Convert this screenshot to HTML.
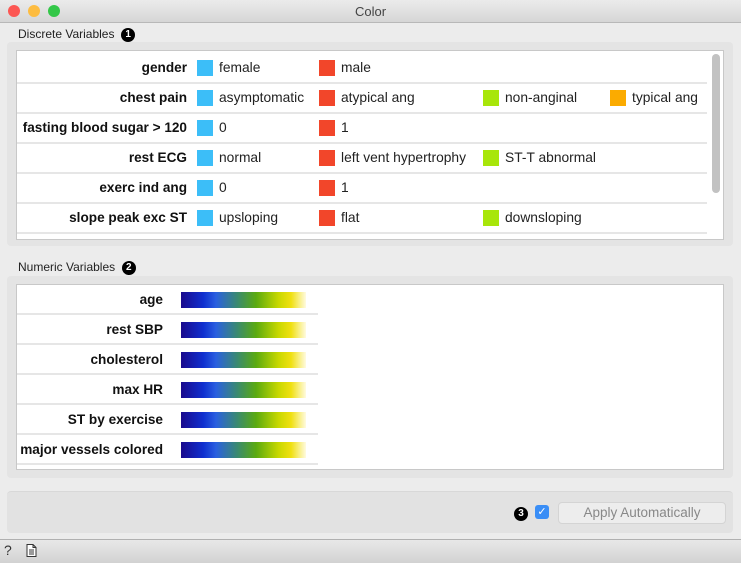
<!DOCTYPE html>
<html><head><style>
body{margin:0;width:741px;height:562px;background:#ececec;font-family:"Liberation Sans",sans-serif;position:relative;overflow:hidden}
.a{position:absolute}
.t{font-size:13.8px;color:#222;white-space:nowrap}
.lb{font-weight:bold;font-size:13.6px;color:#111;text-align:right;white-space:nowrap}
.sw{position:absolute;width:16px;height:16px}
.sep{position:absolute;height:2px;background:#e6e6e6}
.grad{position:absolute;left:181px;width:125px;height:16px;background:linear-gradient(90deg,#1a0a8c 0%,#1030d0 18%,#2a60e0 28%,#3a8a70 45%,#5aaa10 60%,#c8d800 78%,#f0e010 88%,#fffbe0 100%)}
.bullet{display:inline-block;width:14px;height:14px;border-radius:50%;background:#000;color:#fff;font-size:10px;font-weight:bold;text-align:center;line-height:14px;vertical-align:middle}
</style></head><body>
<div class="a" style="left:0;top:0;width:741px;height:22px;background:linear-gradient(#ebebeb,#d6d6d6);border-bottom:1px solid #b8b8b8"></div>
<div class="a" style="left:8px;top:5px;width:12px;height:12px;border-radius:50%;background:#fc5753"></div>
<div class="a" style="left:28px;top:5px;width:12px;height:12px;border-radius:50%;background:#fdbc40"></div>
<div class="a" style="left:48px;top:5px;width:12px;height:12px;border-radius:50%;background:#33c748"></div>
<div class="a t" style="left:0;width:741px;top:4px;text-align:center;color:#444;font-size:13px">Color</div>

<div class="a t" style="left:18px;top:27px;font-size:12px">Discrete Variables &nbsp;<span class="bullet">1</span></div>
<div class="a" style="left:7px;top:42px;width:726px;height:204px;background:#e4e4e4;border-radius:4px"></div>
<div class="a" style="left:16px;top:50px;width:706px;height:188px;background:#fff;border:1px solid #c8c8c8"></div>
<div class="a" style="left:712px;top:54px;width:8px;height:139px;background:#c2c2c2;border-radius:4px"></div>
<div class="sep" style="left:17px;top:82px;width:690px"></div>
<div class="sep" style="left:17px;top:112px;width:690px"></div>
<div class="sep" style="left:17px;top:142px;width:690px"></div>
<div class="sep" style="left:17px;top:172px;width:690px"></div>
<div class="sep" style="left:17px;top:202px;width:690px"></div>
<div class="sep" style="left:17px;top:232px;width:690px"></div>

<div class="a lb" style="right:554px;top:60px">gender</div>
<div class="sw" style="left:197px;top:60px;background:#3cbef8"></div><div class="a t" style="left:219px;top:60px">female</div>
<div class="sw" style="left:319px;top:60px;background:#f2462a"></div><div class="a t" style="left:341px;top:60px">male</div>

<div class="a lb" style="right:554px;top:90px">chest pain</div>
<div class="sw" style="left:197px;top:90px;background:#3cbef8"></div><div class="a t" style="left:219px;top:90px">asymptomatic</div>
<div class="sw" style="left:319px;top:90px;background:#f2462a"></div><div class="a t" style="left:341px;top:90px">atypical ang</div>
<div class="sw" style="left:483px;top:90px;background:#a8e60a"></div><div class="a t" style="left:505px;top:90px">non-anginal</div>
<div class="sw" style="left:610px;top:90px;background:#fbab00"></div><div class="a t" style="left:632px;top:90px">typical ang</div>

<div class="a lb" style="right:554px;top:120px">fasting blood sugar &gt; 120</div>
<div class="sw" style="left:197px;top:120px;background:#3cbef8"></div><div class="a t" style="left:219px;top:120px">0</div>
<div class="sw" style="left:319px;top:120px;background:#f2462a"></div><div class="a t" style="left:341px;top:120px">1</div>

<div class="a lb" style="right:554px;top:150px">rest ECG</div>
<div class="sw" style="left:197px;top:150px;background:#3cbef8"></div><div class="a t" style="left:219px;top:150px">normal</div>
<div class="sw" style="left:319px;top:150px;background:#f2462a"></div><div class="a t" style="left:341px;top:150px">left vent hypertrophy</div>
<div class="sw" style="left:483px;top:150px;background:#a8e60a"></div><div class="a t" style="left:505px;top:150px">ST-T abnormal</div>

<div class="a lb" style="right:554px;top:180px">exerc ind ang</div>
<div class="sw" style="left:197px;top:180px;background:#3cbef8"></div><div class="a t" style="left:219px;top:180px">0</div>
<div class="sw" style="left:319px;top:180px;background:#f2462a"></div><div class="a t" style="left:341px;top:180px">1</div>

<div class="a lb" style="right:554px;top:210px">slope peak exc ST</div>
<div class="sw" style="left:197px;top:210px;background:#3cbef8"></div><div class="a t" style="left:219px;top:210px">upsloping</div>
<div class="sw" style="left:319px;top:210px;background:#f2462a"></div><div class="a t" style="left:341px;top:210px">flat</div>
<div class="sw" style="left:483px;top:210px;background:#a8e60a"></div><div class="a t" style="left:505px;top:210px">downsloping</div>

<div class="a t" style="left:18px;top:260px;font-size:12px">Numeric Variables &nbsp;<span class="bullet">2</span></div>
<div class="a" style="left:7px;top:276px;width:726px;height:202px;background:#e4e4e4;border-radius:4px"></div>
<div class="a" style="left:16px;top:284px;width:706px;height:184px;background:#fff;border:1px solid #c8c8c8"></div>
<div class="sep" style="left:17px;top:313px;width:301px"></div>
<div class="sep" style="left:17px;top:343px;width:301px"></div>
<div class="sep" style="left:17px;top:373px;width:301px"></div>
<div class="sep" style="left:17px;top:403px;width:301px"></div>
<div class="sep" style="left:17px;top:433px;width:301px"></div>
<div class="sep" style="left:17px;top:463px;width:301px"></div>

<div class="a lb" style="right:578px;top:292px">age</div><div class="grad" style="top:292px"></div>
<div class="a lb" style="right:578px;top:322px">rest SBP</div><div class="grad" style="top:322px"></div>
<div class="a lb" style="right:578px;top:352px">cholesterol</div><div class="grad" style="top:352px"></div>
<div class="a lb" style="right:578px;top:382px">max HR</div><div class="grad" style="top:382px"></div>
<div class="a lb" style="right:578px;top:412px">ST by exercise</div><div class="grad" style="top:412px"></div>
<div class="a lb" style="right:578px;top:442px">major vessels colored</div><div class="grad" style="top:442px"></div>

<div class="a" style="left:7px;top:491px;width:726px;height:41px;background:#e2e2e2;border-radius:4px;border-top:1px solid #d8d8d8"></div>
<div class="a" style="left:514px;top:505px"><span class="bullet">3</span></div>
<div class="a" style="left:535px;top:505px;width:14px;height:14px;background:#3a8ef6;border-radius:3px;color:#fff;font-size:11px;text-align:center;line-height:14px">✓</div>
<div class="a" style="left:558px;top:502px;width:166px;height:20px;background:#ededed;border:1px solid #d4d4d4;border-radius:4px;color:#888;font-size:13.5px;text-align:center;line-height:20px">Apply Automatically</div>

<div class="a" style="left:0;top:539px;width:741px;height:23px;background:linear-gradient(#e8e8e8,#d2d2d2);border-top:1px solid #b0b0b0"></div>
<div class="a" style="left:4px;top:542px;font-size:14px;color:#333">?</div>
<svg class="a" style="left:26px;top:544px" width="11" height="13"><path d="M1 .5h6l3 3v9H1z M7 .5v3h3 M3 6h5M3 8h5M3 10h5" fill="#fff" stroke="#333" stroke-width="1"/></svg>
</body></html>
